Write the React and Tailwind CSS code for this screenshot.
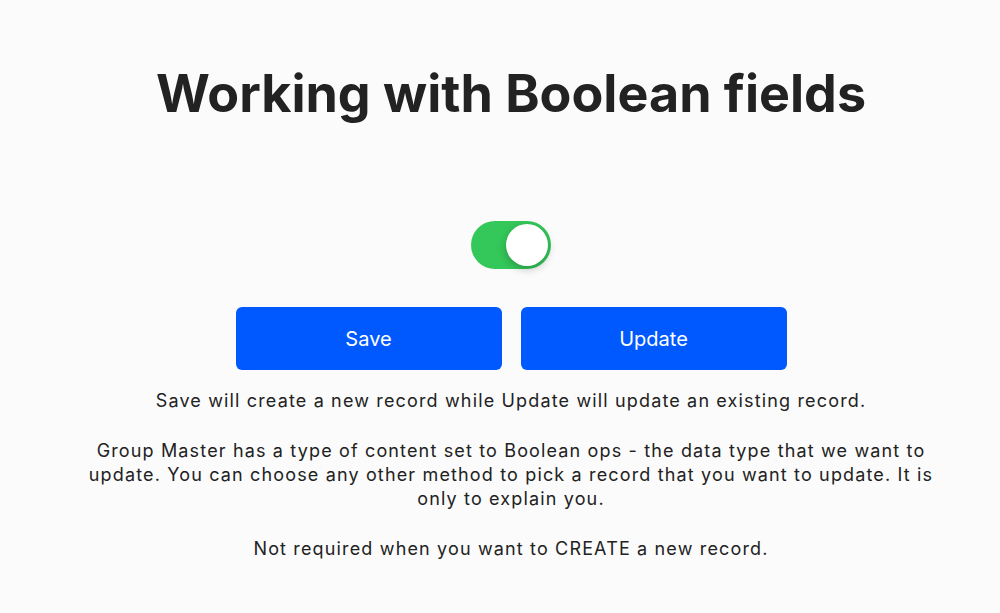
import { useState } from 'react';

export default function App() {
  const [enabled, setEnabled] = useState(true);

  return (
    <div className="min-h-screen bg-[#fbfbfb] pl-[22px] text-[#222222] font-['Inter','Roboto',sans-serif]">
      <div className="mx-auto flex w-[860px] flex-col items-center pt-[62px]">
        <h1 className="text-[52px] font-bold leading-[64px]">Working with Boolean fields</h1>

        {/* toggle */}
        <button
          onClick={() => setEnabled(!enabled)}
          className={`mt-[95px] flex h-[48px] w-[80px] items-center rounded-full p-[3px] ${enabled ? 'justify-end bg-[#34c759]' : 'justify-start bg-gray-300'}`}
        >
          <span className="h-[42px] w-[42px] rounded-full bg-white shadow-[0_3px_8px_rgba(0,0,0,0.25)]" />
        </button>

        <div className="mt-[38px] flex gap-[19px]">
          <button className="h-[63px] w-[266px] rounded-[6px] bg-[#0059ff] text-[20px] text-white">Save</button>
          <button className="h-[63px] w-[266px] rounded-[6px] bg-[#0059ff] text-[20px] text-white">Update</button>
        </div>

        <div className="mt-[19px] text-center text-[18px] leading-[24px] tracking-[1.15px]">
          <p>Save will create a new record while Update will update an existing record.</p>
          <p className="mt-[26px]">
            Group Master has a type of content set to Boolean ops - the data type that we want to update. You can choose any other method to pick a record that you want to update. It is only to explain you.
          </p>
          <p className="mt-[26px]">Not required when you want to CREATE a new record.</p>
        </div>
      </div>
    </div>
  );
}
